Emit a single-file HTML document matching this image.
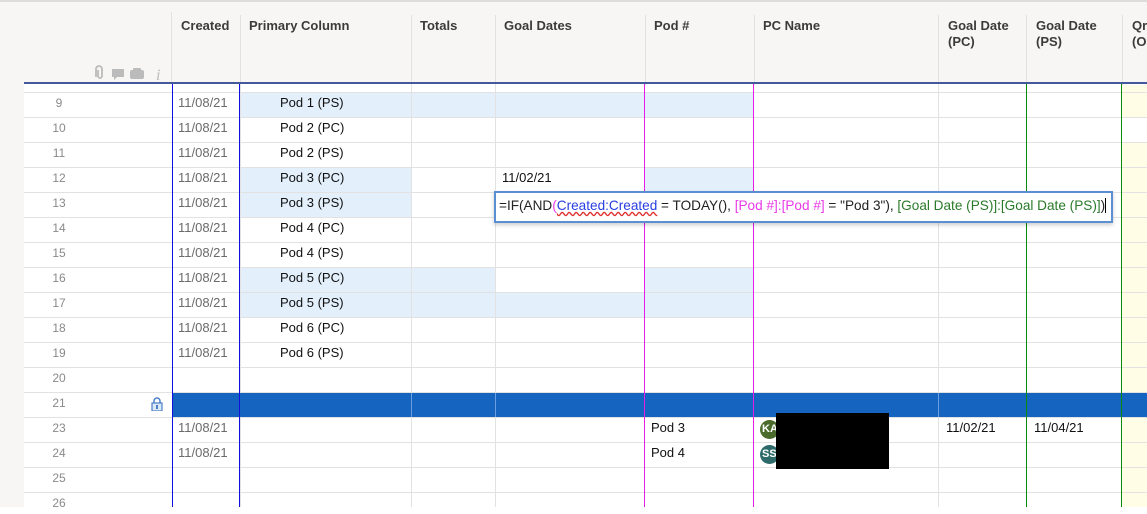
<!DOCTYPE html>
<html><head><meta charset="utf-8"><style>
*{margin:0;padding:0;box-sizing:border-box}
body{width:1147px;height:507px;overflow:hidden;background:#fff;font-family:"Liberation Sans",Arial,sans-serif;position:relative}
.a{position:absolute}
.hd{position:absolute;top:18px;font-size:13px;font-weight:bold;color:#3b3b3b;line-height:16px}
.t{position:absolute;font-size:13px;line-height:22px;color:#111;white-space:nowrap}
.g{color:#6b6b6b}
.n{position:absolute;width:70px;left:24px;text-align:center;font-size:12px;color:#8a8a8a;line-height:22px}
.hl{position:absolute;background:#e3f0fc;height:24px}
.v{position:absolute;top:0;width:1px;height:507px;background:#e2e2e2}
</style></head><body>
<div class="a" style="left:0;top:0;width:1147px;height:84px;background:#f7f6f5;border-top:2px solid #ddd"></div>
<div class="a" style="left:0;top:84px;width:24px;height:423px;background:#f7f6f5"></div>
<div class="a" style="left:1122px;top:85px;width:25px;height:422px;background:#fffde6"></div>
<div class="a" style="left:1122px;top:118px;width:25px;height:24px;background:#fff"></div>
<div class="hl" style="left:240px;top:93px;width:514px"></div>
<div class="hl" style="left:240px;top:168px;width:171px"></div>
<div class="hl" style="left:645px;top:168px;width:109px"></div>
<div class="hl" style="left:240px;top:193px;width:171px"></div>
<div class="hl" style="left:645px;top:193px;width:109px"></div>
<div class="hl" style="left:240px;top:268px;width:255px"></div>
<div class="hl" style="left:645px;top:268px;width:109px"></div>
<div class="hl" style="left:240px;top:293px;width:514px"></div>
<div class="a" style="left:24px;top:84px;width:1123px;height:423px;background:repeating-linear-gradient(to bottom,transparent 0,transparent 8px,#e2e2e2 8px,#e2e2e2 9px,transparent 9px,transparent 25px)"></div>
<div class="v" style="left:240px;top:15px;height:492px"></div>
<div class="v" style="left:411px;top:15px;height:492px"></div>
<div class="v" style="left:495px;top:15px;height:492px"></div>
<div class="v" style="left:645px;top:15px;height:70px"></div>
<div class="v" style="left:754px;top:15px;height:70px"></div>
<div class="v" style="left:938px;top:15px;height:492px"></div>
<div class="v" style="left:1026px;top:15px;height:70px"></div>
<div class="v" style="left:1122px;top:15px;height:70px"></div>
<div class="v" style="left:171px;top:12px;height:72px"></div>
<div class="a" style="left:172px;top:393px;width:975px;height:24px;background:#1565c0"></div>
<div class="a" style="left:411px;top:393px;width:1px;height:24px;background:#6b9ee0"></div>
<div class="a" style="left:495px;top:393px;width:1px;height:24px;background:#6b9ee0"></div>
<div class="a" style="left:938px;top:393px;width:1px;height:24px;background:#6b9ee0"></div>
<div class="a" style="left:172px;top:84px;width:1px;height:423px;background:#1010e0"></div>
<div class="a" style="left:239px;top:84px;width:1px;height:423px;background:#1010e0"></div>
<div class="a" style="left:644px;top:84px;width:1px;height:423px;background:#e81ce8"></div>
<div class="a" style="left:753px;top:84px;width:1px;height:423px;background:#e81ce8"></div>
<div class="a" style="left:1026px;top:84px;width:1px;height:423px;background:#0a8a0a"></div>
<div class="a" style="left:1121px;top:84px;width:1px;height:423px;background:#0a8a0a"></div>
<div class="a" style="left:24px;top:82px;width:1123px;height:2px;background:#43599a"></div>
<div class="hd" style="left:181px">Created</div>
<div class="hd" style="left:249px">Primary Column</div>
<div class="hd" style="left:420px">Totals</div>
<div class="hd" style="left:504px">Goal Dates</div>
<div class="hd" style="left:654px">Pod #</div>
<div class="hd" style="left:763px">PC Name</div>
<div class="hd" style="left:948px">Goal Date<br>(PC)</div>
<div class="hd" style="left:1036px">Goal Date<br>(PS)</div>
<div class="hd" style="left:1132px">Qr<br>(O</div>
<svg class="a" style="left:92px;top:64px" width="74" height="18">
<path d="M4 13 V5 a3 3 0 0 1 6 0 V12 a2 2 0 0 1 -4 0 V6" fill="none" stroke="#bbb" stroke-width="1.8"/>
<path d="M20 5 h12 v8 h-7 l-3 3 v-3 h-2z" fill="#bbb"/>
<rect x="38" y="6" width="14" height="9" rx="2" fill="#bbb"/><rect x="41" y="4" width="8" height="3" rx="1" fill="#bbb"/>
<text x="64" y="16" font-family="Liberation Serif" font-style="italic" font-size="16" fill="#bbb">i</text>
</svg>
<div class="n" style="top:92px">9</div><div class="n" style="top:117px">10</div><div class="n" style="top:142px">11</div>
<div class="n" style="top:167px">12</div><div class="n" style="top:192px">13</div><div class="n" style="top:217px">14</div>
<div class="n" style="top:242px">15</div><div class="n" style="top:267px">16</div><div class="n" style="top:292px">17</div>
<div class="n" style="top:317px">18</div><div class="n" style="top:342px">19</div><div class="n" style="top:367px">20</div>
<div class="n" style="top:392px">21</div><div class="n" style="top:417px">23</div><div class="n" style="top:442px">24</div>
<div class="n" style="top:467px">25</div><div class="n" style="top:492px">26</div>
<svg class="a" style="left:151px;top:397px" width="12" height="14"><path d="M3 6 V4 a3 3 0 0 1 6 0 V6" fill="none" stroke="#4a7fc8" stroke-width="1.5"/><rect x="1" y="6" width="10" height="8" fill="#dbe8f7" stroke="#4a7fc8" stroke-width="1.2"/><rect x="5" y="8" width="2" height="4" fill="#4a7fc8"/></svg>
<div class="t g" style="left:178px;top:92px">11/08/21</div><div class="t" style="left:280px;top:92px">Pod 1 (PS)</div>
<div class="t g" style="left:178px;top:117px">11/08/21</div><div class="t" style="left:280px;top:117px">Pod 2 (PC)</div>
<div class="t g" style="left:178px;top:142px">11/08/21</div><div class="t" style="left:280px;top:142px">Pod 2 (PS)</div>
<div class="t g" style="left:178px;top:167px">11/08/21</div><div class="t" style="left:280px;top:167px">Pod 3 (PC)</div>
<div class="t g" style="left:178px;top:192px">11/08/21</div><div class="t" style="left:280px;top:192px">Pod 3 (PS)</div>
<div class="t g" style="left:178px;top:217px">11/08/21</div><div class="t" style="left:280px;top:217px">Pod 4 (PC)</div>
<div class="t g" style="left:178px;top:242px">11/08/21</div><div class="t" style="left:280px;top:242px">Pod 4 (PS)</div>
<div class="t g" style="left:178px;top:267px">11/08/21</div><div class="t" style="left:280px;top:267px">Pod 5 (PC)</div>
<div class="t g" style="left:178px;top:292px">11/08/21</div><div class="t" style="left:280px;top:292px">Pod 5 (PS)</div>
<div class="t g" style="left:178px;top:317px">11/08/21</div><div class="t" style="left:280px;top:317px">Pod 6 (PC)</div>
<div class="t g" style="left:178px;top:342px">11/08/21</div><div class="t" style="left:280px;top:342px">Pod 6 (PS)</div>
<div class="t" style="left:502px;top:167px">11/02/21</div>
<div class="t g" style="left:178px;top:417px">11/08/21</div><div class="t" style="left:651px;top:417px">Pod 3</div>
<div class="t g" style="left:178px;top:442px">11/08/21</div><div class="t" style="left:651px;top:442px">Pod 4</div>
<div class="t" style="left:946px;top:417px">11/02/21</div><div class="t" style="left:1034px;top:417px">11/04/21</div>
<div class="a" style="left:760px;top:420px;width:19px;height:19px;border-radius:50%;background:#4a6b2c;color:#fff;font-size:11px;font-weight:bold;line-height:19px;padding-left:2px">KA</div>
<div class="a" style="left:760px;top:445px;width:19px;height:19px;border-radius:50%;background:#2e6a6a;color:#fff;font-size:11px;font-weight:bold;line-height:19px;padding-left:2px">SS</div>
<div class="a" style="left:776px;top:413px;width:113px;height:56px;background:#000"></div>
<div class="a" style="left:494px;top:191px;width:619px;height:32px;background:#fff;border:2px solid #5b8fd4;box-shadow:0 2px 4px rgba(0,0,0,.2)"></div>
<div class="t" style="left:499px;top:194px;font-size:13.6px;line-height:24px;color:#222">=IF(AND<span style="color:#e83ae8">(</span><span style="color:#2a3fe0;text-decoration:underline wavy #e03030">Created:Created</span> = TODAY(), <span style="color:#e83ae8">[Pod #]:[Pod #]</span> = "Pod 3"), <span style="color:#2a7a2a">[Goal Date (PS)]:[Goal Date (PS)]</span>)<span style="border-left:1px solid #000"></span></div>
</body></html>
